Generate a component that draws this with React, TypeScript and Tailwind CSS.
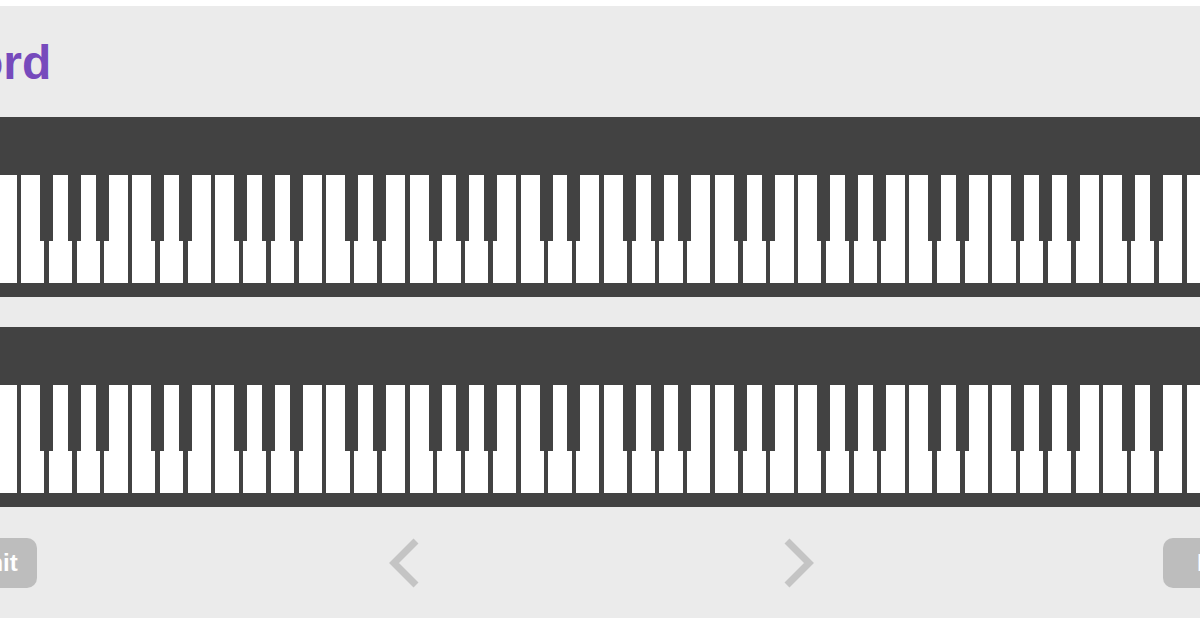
import React from 'react';

// 88-key layout: white keys from A0 to C8
const LETTERS = ['A', 'B', 'C', 'D', 'E', 'F', 'G'];
const WHITE_KEYS = Array.from({ length: 52 }, (_, i) => LETTERS[i % 7]);
const HAS_SHARP = new Set(['A', 'C', 'D', 'F', 'G']);

const Keyboard: React.FC = () => (
    <div className="w-[1600px] shrink-0 bg-[#424242] pt-[58px] pb-[14px] pl-[3px] flex justify-center">
        <div className="flex gap-[4.5px]">
            {WHITE_KEYS.map((letter, i) => (
                <div key={i} className="relative w-[23.26px] h-[108px] bg-white">
                    {HAS_SHARP.has(letter) && i < WHITE_KEYS.length - 1 && (
                        <div className="absolute top-0 -right-[8.75px] z-10 w-[13px] h-[66px] bg-[#424242]" />
                    )}
                </div>
            ))}
        </div>
    </div>
);

const Chevron: React.FC<{ dir: 'left' | 'right' }> = ({ dir }) => (
    <svg width="32" height="50" viewBox="0 0 32 50" className="shrink-0">
        <polyline
            points={dir === 'left' ? '28,3 6,25 28,47' : '4,3 26,25 4,47'}
            fill="none"
            stroke="#c4c4c4"
            strokeWidth="7"
            strokeLinejoin="miter"
        />
    </svg>
);

export default function App() {
    return (
        <div className="w-[1200px] h-[628px] overflow-hidden bg-white pt-[6px] font-['Liberation_Sans',Arial,sans-serif]">
            <div className="h-[612px] bg-[#ebebeb] flex flex-col items-center pt-[33px]">
                <h1 className="w-[1380px] shrink-0 text-[48px] leading-[48px] font-bold text-[#764abc]">Chord</h1>

                <div className="mt-[30px]">
                    <Keyboard />
                </div>
                <div className="mt-[30px]">
                    <Keyboard />
                </div>

                <div className="mt-[31px] flex items-center shrink-0">
                    <button className="w-[120px] h-[50px] rounded-[10px] bg-[#bdbdbd] text-white text-[24px] font-bold">
                        Submit
                    </button>
                    <div className="ml-[351px]">
                        <Chevron dir="left" />
                    </div>
                    <div className="ml-[363px]">
                        <Chevron dir="right" />
                    </div>
                    <button className="ml-[348px] w-[120px] h-[50px] rounded-[10px] bg-[#bdbdbd] text-white text-[24px] font-bold">
                        Next
                    </button>
                </div>
            </div>
        </div>
    );
}
